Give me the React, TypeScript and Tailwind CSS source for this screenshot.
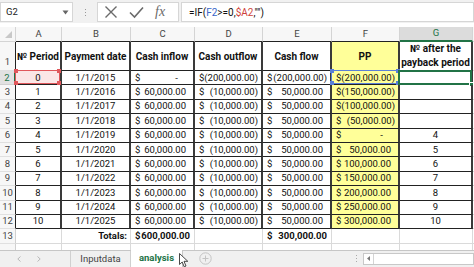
import React from "react";

const colW = ["w-[46px]", "w-[69px]", "w-[64px]", "w-[68px]", "w-[69px]", "w-[68px]", "w-[73px]"];
const letters = ["A", "B", "C", "D", "E", "F", "G"];

type Acc = { k: "pos" | "neg" | "zero"; v?: string };

const fVals: Acc[] = [
  { k: "neg", v: "(200,000.00)" },
  { k: "neg", v: "(150,000.00)" },
  { k: "neg", v: "(100,000.00)" },
  { k: "neg", v: "(50,000.00)" },
  { k: "zero" },
  { k: "pos", v: "50,000.00" },
  { k: "pos", v: "100,000.00" },
  { k: "pos", v: "150,000.00" },
  { k: "pos", v: "200,000.00" },
  { k: "pos", v: "250,000.00" },
  { k: "pos", v: "300,000.00" },
];

const rows = fVals.map((f, i) => ({
  n: String(i),
  d: `1/1/${2015 + i}`,
  c: i === 0 ? ({ k: "zero" } as Acc) : ({ k: "pos", v: "60,000.00" } as Acc),
  dd: i === 0 ? ({ k: "neg", v: "(200,000.00)" } as Acc) : ({ k: "neg", v: "(10,000.00)" } as Acc),
  e: i === 0 ? ({ k: "neg", v: "(200,000.00)" } as Acc) : ({ k: "pos", v: "50,000.00" } as Acc),
  f,
  g: i >= 4 ? String(i) : "",
}));

function AccCell({ a, bold }: { a: Acc; bold?: boolean }) {
  const pr = a.k === "pos" ? (bold ? "pr-[4px]" : "pr-[7px]") : a.k === "neg" ? "pr-[3px]" : "pr-[15px]";
  return (
    <div className={`flex h-full items-center justify-between pl-[4px] ${pr} ${bold ? "font-bold" : ""}`}>
      <span>$</span>
      <span>{a.k === "zero" ? "-" : a.v}</span>
    </div>
  );
}

const cellB = "border-r-2 border-r-[#3a3a3a] border-b border-b-[#222]";

function Corners({ color }: { color: string }) {
  return (
    <>
      <span className={`absolute -left-[2px] -top-[2px] h-[4px] w-[4px] ${color}`} />
      <span className={`absolute -right-[2px] -top-[2px] h-[4px] w-[4px] ${color}`} />
      <span className={`absolute -left-[2px] -bottom-[2px] h-[4px] w-[4px] ${color}`} />
      <span className={`absolute -right-[2px] -bottom-[2px] h-[4px] w-[4px] ${color}`} />
    </>
  );
}

export default function App() {
  return (
    <div className="relative h-[267px] w-[474px] overflow-hidden bg-white font-['Roboto',sans-serif] text-[9.5px] text-[#111]">
      {/* Formula bar */}
      <div className="flex h-[23px] items-center bg-[#f1f1f1] pt-[1px]">
        <div className="flex h-[20px] w-[73px] items-center justify-between border border-[#d6d6d6] bg-white pl-[5px] pr-[3px] text-[#222]">
          <span>G2</span>
          <svg width="7" height="5" viewBox="0 0 7 5">
            <path d="M0.5 0.5 L6.5 0.5 L3.5 4.5 Z" fill="#666" />
          </svg>
        </div>
        <div className="flex w-[24px] flex-col items-center justify-center gap-[2px]">
          <span className="h-[1px] w-[1px] bg-[#999]" />
          <span className="h-[1px] w-[1px] bg-[#999]" />
          <span className="h-[1px] w-[1px] bg-[#999]" />
        </div>
        <div className="flex h-[20px] w-[82px] items-center gap-[11px] border border-[#d6d6d6] bg-white pl-[6px]">
          <svg width="14" height="14" viewBox="0 0 14 14">
            <path d="M1.5 1.5 L12.5 12.5 M12.5 1.5 L1.5 12.5" stroke="#6a6a6a" strokeWidth="1.4" />
          </svg>
          <svg width="15" height="13" viewBox="0 0 15 13">
            <path d="M1 6.5 L5.5 11 L14 1.5" stroke="#6a6a6a" strokeWidth="1.6" fill="none" />
          </svg>
          <span className="font-['Liberation_Serif',serif] text-[14px] italic leading-none text-[#6a6a6a]">fx</span>
        </div>
        <div className="ml-[2px] flex h-[20px] flex-1 items-center border border-[#d6d6d6] bg-white pl-[7px] text-[10px] text-[#111]">
          <span>=IF(</span>
          <span className="text-[#3a66c8]">F2</span>
          <span>&gt;=0,</span>
          <span className="text-[#cf3f3a]">$A2</span>
          <span>,"")</span>
        </div>
      </div>
      <div className="h-[4px] bg-white" />

      {/* Column headers */}
      <div className="flex h-[15px] bg-[#f7f7f7] text-[#444]">
        <div className="relative w-[16px] border-r border-b border-[#d4d4d4]">
          <svg className="absolute bottom-[3px] right-[3px]" width="7" height="7" viewBox="0 0 7 7">
            <path d="M7 0 L7 7 L0 7 Z" fill="#c8c8c8" />
          </svg>
        </div>
        {letters.map((l, i) =>
          l === "G" ? (
            <div key={l} className={`${colW[i]} flex items-center justify-center border-b-2 border-b-[#217346] border-r border-r-[#d4d4d4] bg-[#dcdcdc] text-[#217346]`}>
              {l}
            </div>
          ) : (
            <div key={l} className={`${colW[i]} flex items-center justify-center border-b border-b-[#222] border-r border-r-[#d4d4d4]`}>
              {l}
            </div>
          )
        )}
        <div className="flex-1 border-b border-[#d4d4d4]" />
      </div>

      {/* Row 1 */}
      <div className="flex h-[29px] font-bold text-[10px]">
        <div className="flex w-[16px] items-end justify-center border-r border-r-[#222] border-b border-b-[#e0e0e0] bg-[#f7f7f7] pb-[1px] font-normal text-[9.5px] text-[#444]">1</div>
        {["№ Period", "Payment date", "Cash inflow", "Cash outflow", "Cash flow", "PP"].map((t, i) => (
          <div key={t} className={`${colW[i]} ${cellB} flex items-center justify-center whitespace-nowrap ${i === 5 ? "bg-[#ffff99]" : ""}`}>
            {t}
          </div>
        ))}
        <div className={`${colW[6]} ${cellB} flex flex-col items-center justify-center whitespace-nowrap leading-[14px]`}>
          <span>№ after the</span>
          <span>payback period</span>
        </div>
        <div className="flex-1 border-b border-[#dadada]" />
      </div>

      {/* Data rows */}
      {rows.map((r, i) => (
        <div key={i} className="flex h-[14.4px]">
          {i === 0 ? (
            <div className="flex w-[16px] items-center justify-center border-r-2 border-r-[#217346] border-b border-b-[#d0d0d0] bg-[#e1e1e1] text-[#217346]">2</div>
          ) : (
            <div className="flex w-[16px] items-center justify-center border-r border-r-[#222] border-b border-b-[#e0e0e0] bg-[#f7f7f7] text-[#444]">{i + 2}</div>
          )}
          <div className={`${colW[0]} ${cellB} relative flex items-center justify-center ${i === 0 ? "bg-[#fbe6e6]" : ""}`}>
            {r.n}
            {i === 0 && (
              <span className="absolute -left-[1px] -top-[1px] bottom-0 right-0 border border-[#e0575b]">
                <Corners color="bg-[#e0575b]" />
              </span>
            )}
          </div>
          <div className={`${colW[1]} ${cellB} flex items-center justify-center`}>{r.d}</div>
          <div className={`${colW[2]} ${cellB}`}>
            <AccCell a={r.c} />
          </div>
          <div className={`${colW[3]} ${cellB}`}>
            <AccCell a={r.dd} />
          </div>
          <div className={`${colW[4]} ${cellB}`}>
            <AccCell a={r.e} />
          </div>
          <div className={`${colW[5]} ${cellB} relative bg-[#ffff99]`}>
            <AccCell a={r.f} />
            {i === 0 && (
              <span className="absolute -left-[1px] -top-[1px] -right-[1px] bottom-0 border border-[#5a7fd8]">
                <Corners color="bg-[#5a7fd8]" />
              </span>
            )}
          </div>
          <div className={`${colW[6]} ${cellB} relative flex items-center justify-center`}>
            {r.g}
            {i === 0 && (
              <span className="absolute -left-[2px] -top-[1px] -right-[1px] -bottom-[1px] border-2 border-[#217346]">
                <span className="absolute -bottom-[4px] -right-[4px] h-[5px] w-[5px] border border-white bg-[#217346]" />
              </span>
            )}
          </div>
          <div className="flex-1 border-b border-[#dadada]" />
        </div>
      ))}

      {/* Totals row */}
      <div className="flex h-[14.4px] font-bold">
        <div className="flex w-[16px] items-center justify-center border-r border-r-[#d0d0d0] border-b border-b-[#e0e0e0] bg-[#f7f7f7] font-normal text-[#444]">13</div>
        <div className={`${colW[0]} border-r border-b border-[#dadada]`} />
        <div className={`${colW[1]} flex items-center justify-end border-r border-b border-[#dadada] pr-[3px]`}>Totals:</div>
        <div className={`${colW[2]} border-r border-b border-[#dadada]`}>
          <div className="flex h-full items-center justify-between pl-[4px] pr-[4px]">
            <span>$</span>
            <span>600,000.00</span>
          </div>
        </div>
        <div className={`${colW[3]} border-r border-b border-[#dadada]`} />
        <div className={`${colW[4]} border-r border-b border-[#dadada]`}>
          <AccCell a={{ k: "pos", v: "300,000.00" }} bold />
        </div>
        <div className={`${colW[5]} border-r border-b border-[#dadada]`} />
        <div className={`${colW[6]} border-r border-b border-[#dadada]`} />
        <div className="flex-1 border-b border-[#dadada]" />
      </div>

      {/* Partial row 14 */}
      <div className="flex h-[6.2px]">
        <div className="w-[16px] border-r border-[#d0d0d0] bg-[#f7f7f7]" />
        {colW.map((w) => (
          <div key={w + "14"} className={`${w} border-r border-[#dadada]`} />
        ))}
        <div className="flex-1" />
      </div>

      {/* Sheet tabs */}
      <div className="relative flex h-[17px] items-stretch border-t border-[#c6c6c6] bg-[#f0f0f0] text-[9.5px]">
        <div className="flex w-[70px] items-center gap-[16px] pl-[17px]">
          <svg width="4" height="6" viewBox="0 0 4 6">
            <path d="M3.5 0.5 L0.8 3 L3.5 5.5" stroke="#b8b8b8" fill="none" />
          </svg>
          <svg width="4" height="6" viewBox="0 0 4 6">
            <path d="M0.5 0.5 L3.2 3 L0.5 5.5" stroke="#b8b8b8" fill="none" />
          </svg>
        </div>
        <div className="flex w-[61px] items-center justify-center border-x border-[#d0d0d0] text-[#444]">Inputdata</div>
        <div className="-mt-[1px] flex w-[52px] items-center justify-center border-r border-[#c6c6c6] bg-white font-bold text-[#217346]">analysis</div>
        <div className="flex w-[44px] items-center justify-center">
          <svg width="13" height="13" viewBox="0 0 13 13">
            <circle cx="6.5" cy="6.5" r="5.7" stroke="#c4c4c4" fill="none" />
            <path d="M6.5 3.5 L6.5 9.5 M3.5 6.5 L9.5 6.5" stroke="#c4c4c4" />
          </svg>
        </div>
        <div className="flex-1" />
        <div className="flex w-[8px] flex-col items-center justify-center gap-[2px]">
          <span className="h-[1px] w-[1px] bg-[#aaa]" />
          <span className="h-[1px] w-[1px] bg-[#aaa]" />
          <span className="h-[1px] w-[1px] bg-[#aaa]" />
        </div>
        <div className="ml-[3px] flex w-[111px] items-center">
          <div className="flex h-[12px] w-full items-center border border-[#c8c8c8] bg-white">
            <div className="flex h-full w-[10px] items-center justify-center border-r border-[#d4d4d4]">
              <svg width="3" height="5" viewBox="0 0 3 5">
                <path d="M3 0 L0 2.5 L3 5 Z" fill="#777" />
              </svg>
            </div>
          </div>
        </div>
        {/* mouse cursor */}
        <svg className="absolute left-[179px] top-[2px]" width="11" height="15" viewBox="0 0 11 15">
          <path d="M0.5 0.5 L0.5 11.5 L3.2 9 L5.2 13.8 L7 13 L5 8.3 L8.8 8.3 Z" fill="white" stroke="#333" strokeWidth="0.9" />
        </svg>
      </div>
    </div>
  );
}
